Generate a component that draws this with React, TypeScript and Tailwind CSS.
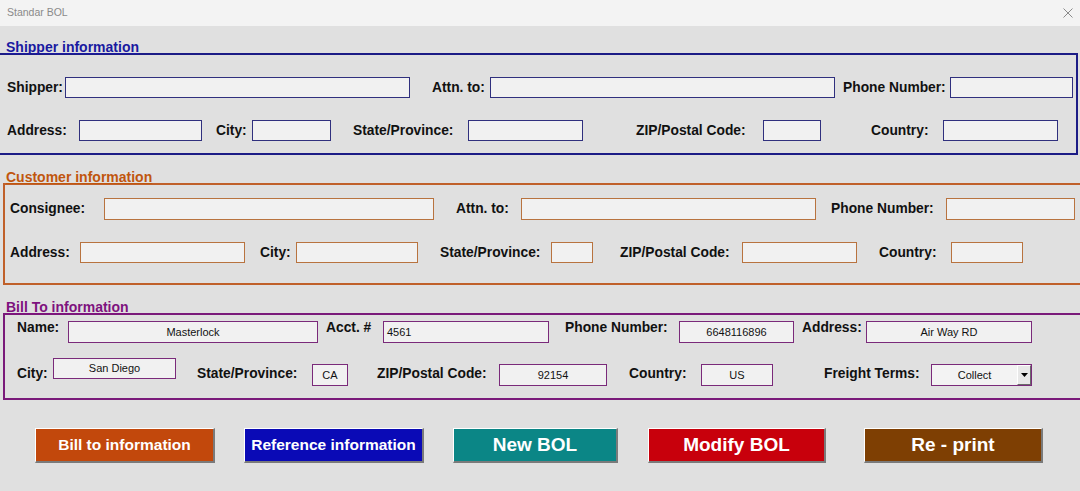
import React from "react"

type Field = {
  label: string
  lc: string
  ic: string
  value?: string
  left?: boolean
  select?: boolean
}

const shipperRows: Field[][] = [
  [
    { label: "Shipper:", lc: "ml-[7px] w-[58px]", ic: "w-[345px] h-[21px]" },
    { label: "Attn. to:", lc: "ml-[22px] w-[58px]", ic: "w-[345px] h-[21px]" },
    { label: "Phone Number:", lc: "ml-[8px] w-[107px]", ic: "w-[123px] h-[21px]" },
  ],
  [
    { label: "Address:", lc: "ml-[7px] w-[72px]", ic: "w-[123px] h-[21px]" },
    { label: "City:", lc: "ml-[14px] w-[36px]", ic: "w-[79px] h-[21px]" },
    { label: "State/Province:", lc: "ml-[22px] w-[115px]", ic: "w-[115px] h-[21px]" },
    { label: "ZIP/Postal Code:", lc: "ml-[53px] w-[127px]", ic: "w-[58px] h-[21px]" },
    { label: "Country:", lc: "ml-[50px] w-[72px]", ic: "w-[115px] h-[21px]" },
  ],
]

const customerRows: Field[][] = [
  [
    { label: "Consignee:", lc: "ml-[5px] w-[94px]", ic: "w-[330px] h-[22px]" },
    { label: "Attn. to:", lc: "ml-[22px] w-[65px]", ic: "w-[295px] h-[22px]" },
    { label: "Phone Number:", lc: "ml-[15px] w-[115px]", ic: "w-[129px] h-[22px]" },
  ],
  [
    { label: "Address:", lc: "ml-[5px] w-[70px]", ic: "w-[165px] h-[21px]" },
    { label: "City:", lc: "ml-[15px] w-[36px]", ic: "w-[122px] h-[21px]" },
    { label: "State/Province:", lc: "ml-[22px] w-[111px]", ic: "w-[42px] h-[21px]" },
    { label: "ZIP/Postal Code:", lc: "ml-[27px] w-[122px]", ic: "w-[115px] h-[21px]" },
    { label: "Country:", lc: "ml-[22px] w-[72px]", ic: "w-[72px] h-[21px]" },
  ],
]

const billRow1: Field[] = [
  { label: "Name:", lc: "ml-[12px] w-[51px]", ic: "w-[250px] h-[22px]", value: "Masterlock" },
  { label: "Acct. #", lc: "ml-[8px] w-[57px]", ic: "w-[166px] h-[22px]", value: "4561", left: true },
  { label: "Phone Number:", lc: "ml-[16px] w-[114px]", ic: "w-[115px] h-[22px]", value: "6648116896" },
  { label: "Address:", lc: "ml-[8px] w-[64px]", ic: "w-[166px] h-[22px]", value: "Air Way RD" },
]

const billRow2: Field[] = [
  { label: "City:", lc: "ml-[12px] w-[36px]", ic: "w-[123px] h-[21px] self-start", value: "San Diego" },
  { label: "State/Province:", lc: "ml-[21px] w-[115px]", ic: "w-[36px] h-[22px]", value: "CA" },
  { label: "ZIP/Postal Code:", lc: "ml-[29px] w-[122px]", ic: "w-[108px] h-[22px]", value: "92154" },
  { label: "Country:", lc: "ml-[22px] w-[72px]", ic: "w-[72px] h-[22px]", value: "US" },
  { label: "Freight Terms:", lc: "ml-[51px] w-[107px]", ic: "w-[101px] h-[22px]", value: "Collect", select: true },
]

function Input({ f, border }: { f: Field; border: string }) {
  if (f.select) {
    return (
      <div className={`${f.ic} flex shrink-0 border ${border} bg-[#f3f3f3]`}>
        <div className="flex flex-1 items-center justify-center text-[11px] font-normal text-[#111]">
          {f.value}
        </div>
        <div className="flex w-[14px] items-center justify-center border-l border-t border-l-white border-t-white border-r border-b border-r-[#6a6a6a] border-b-[#6a6a6a] bg-[#e8e8e8]">
          <svg width="7" height="4" viewBox="0 0 7 4">
            <path d="M0 0h7L3.5 4z" fill="#000" />
          </svg>
        </div>
      </div>
    )
  }
  return (
    <div
      className={`${f.ic} flex shrink-0 items-center border ${border} bg-[#f1f1f1] text-[11px] font-normal text-[#111] ${
        f.left ? "justify-start pl-[3px]" : "justify-center"
      }`}
    >
      {f.value}
    </div>
  )
}

function Row({
  fields,
  border,
  className,
  labelClass = "",
}: {
  fields: Field[]
  border: string
  className: string
  labelClass?: string
}) {
  return (
    <div className={`flex ${className}`}>
      {fields.map((f) => (
        <React.Fragment key={f.label}>
          <span
            className={`${f.lc} ${labelClass} shrink-0 whitespace-nowrap text-[13.8px] font-bold leading-[16px] text-[#111]`}
          >
            {f.label}
          </span>
          <Input f={f} border={border} />
        </React.Fragment>
      ))}
    </div>
  )
}

function Heading({ children, className }: { children: React.ReactNode; className: string }) {
  return (
    <div
      className={`h-[15px] pl-[6px] text-[14px] font-bold leading-[18px] underline underline-offset-[1px] ${className}`}
    >
      {children}
    </div>
  )
}

const buttons = [
  { text: "Bill to information", cls: "ml-[35px] w-[180px] bg-[#c2480c] text-[15.5px]" },
  { text: "Reference information", cls: "ml-[29px] w-[180px] bg-[#0a0ab6] text-[15.5px]" },
  { text: "New BOL", cls: "ml-[29px] w-[165px] bg-[#0b8686] text-[19px]" },
  { text: "Modify BOL", cls: "ml-[30px] w-[178px] bg-[#c8000c] text-[19px]" },
  { text: "Re - print", cls: "ml-[38px] w-[179px] bg-[#7e3f03] text-[19px]" },
]

export default function App() {
  return (
    <div className="h-[491px] w-[1080px] overflow-hidden bg-[#e0e0e0] font-['Liberation_Sans',Arial,sans-serif]">
      {/* title bar */}
      <div className="flex h-[26px] items-center justify-between bg-[#f3f3f3] pl-[7px] pr-[5px]">
        <span className="text-[10.5px] text-[#8a8a8a]">Standar BOL</span>
        <svg width="10" height="10" viewBox="0 0 10 10" className="mr-[2px]">
          <path d="M0.5 0.5l9 9M9.5 0.5l-9 9" stroke="#8a8a8a" strokeWidth="1" />
        </svg>
      </div>

      {/* Shipper information */}
      <Heading className="mt-[12px] text-[#1a1aa0]">Shipper information</Heading>
      <div className="w-[1078px] border-t-2 border-r-2 border-b-2 border-[#1c1c86] pt-[22px] pb-[12px]">
        <Row fields={shipperRows[0]} border="border-[#30307e]" className="h-[21px] items-center" />
        <Row fields={shipperRows[1]} border="border-[#30307e]" className="mt-[22px] h-[21px] items-center" />
      </div>

      {/* Customer information */}
      <Heading className="mt-[13px] text-[#c0560e]">Customer information</Heading>
      <div className="ml-[3px] border-t-2 border-l-2 border-b-2 border-[#c0602a] pt-[13px] pb-[20px]">
        <Row fields={customerRows[0]} border="border-[#b8733f]" className="h-[22px] items-center" />
        <Row fields={customerRows[1]} border="border-[#b8733f]" className="mt-[22px] h-[21px] items-center" />
      </div>

      {/* Bill To information */}
      <Heading className="mt-[13px] text-[#7e127e]">Bill To information</Heading>
      <div className="ml-[3px] border-t-2 border-l-2 border-b-2 border-[#7a1a7a] pt-[6px] pb-[12px]">
        <Row
          fields={billRow1}
          border="border-[#7a2a7a]"
          className="h-[22px] items-start"
          labelClass="-mt-[1px]"
        />
        <Row
          fields={billRow2}
          border="border-[#7a2a7a]"
          className="mt-[15px] h-[28px] items-end"
          labelClass="mb-[4px]"
        />
      </div>

      {/* action buttons */}
      <div className="mt-[28px] flex">
        {buttons.map((b) => (
          <button
            key={b.text}
            className={`${b.cls} flex h-[35px] shrink-0 items-center justify-center border-t border-l border-t-white border-l-white border-r-2 border-b-2 border-r-[#7a7a7a] border-b-[#7a7a7a] font-bold text-white`}
          >
            {b.text}
          </button>
        ))}
      </div>
    </div>
  )
}
